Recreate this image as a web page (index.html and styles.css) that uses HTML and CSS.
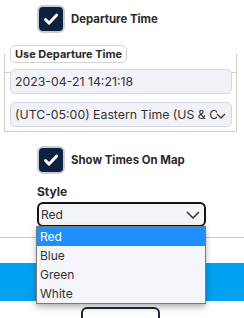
FILE: index.html
```html
<!DOCTYPE html>
<html>
<head>
<meta charset="utf-8">
<link rel="stylesheet" href="styles.css">
</head>
<body>
<div class="page">
  <div class="check-row first">
    <span class="box"><svg viewBox="0 0 28 28" width="28" height="28"><path d="M7.5 14.5l4.3 4.3 8.7-9.3" fill="none" stroke="#fff" stroke-width="3.4" stroke-linecap="round" stroke-linejoin="round"/></svg></span>
    <span class="check-label">Departure Time</span>
  </div>
  <fieldset class="group">
    <legend class="legend">Use Departure Time</legend>
    <div class="field">2023-04-21 14:21:18</div>
    <div class="field select"><span class="sel-text">(UTC-05:00) Eastern Time (US &amp; Canada)</span><svg class="chev" viewBox="0 0 10 6" width="10" height="6"><path d="M1 1l4 4 4-4" fill="none" stroke="#333" stroke-width="1.3"/></svg></div>
  </fieldset>
  <div class="check-row second">
    <span class="box"><svg viewBox="0 0 28 28" width="28" height="28"><path d="M7.5 14.5l4.3 4.3 8.7-9.3" fill="none" stroke="#fff" stroke-width="3.4" stroke-linecap="round" stroke-linejoin="round"/></svg></span>
    <span class="check-label">Show Times On Map</span>
  </div>
  <div class="style-block">
    <div class="style-label">Style</div>
    <div class="style-select"><span>Red</span><svg viewBox="0 0 14 8" width="14" height="8"><path d="M1 1l6 6 6-6" fill="none" stroke="#333" stroke-width="1.5"/></svg></div>
    <ul class="dropdown">
      <li class="opt active">Red</li>
      <li class="opt">Blue</li>
      <li class="opt">Green</li>
      <li class="opt">White</li>
    </ul>
  </div>
  <div class="divider"></div>
  <div class="band"></div>
  <div class="btn-row"><span class="route-btn">View Route</span></div>
</div>
</body>
</html>
```
FILE: styles.css
```css
html, body {
  margin: 0;
  padding: 0;
  background: #fff;
  overflow: hidden;
}
body {
  font-family: Inter, "Noto Sans", sans-serif;
  color: #2a2a2a;
  width: 244px;
  height: 318px;
}
.page {
  padding-top: 5px;
}
.check-row {
  display: flex;
  align-items: center;
  gap: 6px;
  padding-left: 37px;
  height: 28px;
}
.check-row.second {
  margin-top: 14px;
}
.box {
  width: 28px;
  height: 28px;
  box-sizing: border-box;
  border-radius: 6px;
  background: #0e2240;
  border: 2px solid #c9cdd4;
  display: flex;
  align-items: center;
  justify-content: center;
}
.box svg {
  width: 24px;
  height: 24px;
}
.check-label {
  font-weight: 700;
  font-size: 11.4px;
  color: #2b2b2b;
}
.group {
  margin: 12px 7px 0 4px;
  padding: 5px 4px 4px 5px;
  min-width: 0;
  border: 1px solid #cfcfcf;
  border-top: none;
  position: relative;
  display: flex;
  flex-direction: column;
  gap: 8px;
}
.group::before {
  content: "";
  position: absolute;
  left: -1px;
  right: -1px;
  top: 8px;
  border-top: 1px solid #cfcfcf;
}
.legend {
  float: none;
  margin: 0;
  padding: 1px 4px 0 4px;
  height: 18px;
  box-sizing: border-box;
  border: 1px solid #d3d3d3;
  border-radius: 5px;
  background: #fff;
  font-weight: 700;
  font-size: 11px;
  color: #2b2b2b;
  position: relative;
  z-index: 1;
  width: max-content;
  line-height: 15px;
  margin-bottom: 1px;
}
.field {
  height: 25px;
  box-sizing: border-box;
  border: 1px solid #d5d8de;
  border-radius: 5px;
  background: #f1f2f7;
  font-size: 12.3px;
  color: #333;
  padding: 0 4px;
  display: flex;
  align-items: center;
  white-space: nowrap;
  overflow: hidden;
  position: relative;
  min-width: 0;
}
.field.select {
  padding-right: 14px;
}
.sel-text {
  overflow: hidden;
  flex: 1;
  min-width: 0;
}
.chev {
  position: absolute;
  right: 5px;
  top: 10px;
}
.style-block {
  padding-left: 37px;
  margin-top: 10px;
  position: relative;
}
.style-label {
  font-weight: 700;
  font-size: 12px;
  line-height: 16px;
  color: #2b2b2b;
}
.style-select {
  margin-top: 2px;
  width: 169px;
  height: 25px;
  box-sizing: border-box;
  border: 2px solid #151515;
  border-radius: 6px;
  background: #f3f4f8;
  display: flex;
  align-items: center;
  justify-content: space-between;
  padding: 0 4px 0 2px;
  font-size: 12px;
  color: #333;
}
.dropdown {
  position: absolute;
  left: 36px;
  top: 42px;
  width: 170px;
  box-sizing: border-box;
  margin: 0;
  padding: 0;
  list-style: none;
  background: #f4f5fa;
  border: 1px solid #7a7a7a;
  box-shadow: 0 3px 6px rgba(0,0,0,0.3);
  z-index: 5;
}
.opt {
  height: 19px;
  line-height: 19px;
  padding-left: 3px;
  font-size: 12px;
  color: #333;
}
.opt.active {
  background: #1e8fff;
  color: #fff;
}
.divider {
  margin-top: 10px;
  height: 1px;
  background: #c8c8c8;
}
.band {
  margin-top: 25px;
  height: 38px;
  background: #00a1f1;
}
.btn-row {
  display: flex;
  padding-left: 81px;
  padding-top: 6px;
}
.route-btn {
  width: 79px;
  height: 30px;
  box-sizing: border-box;
  border: 2px solid #1a2a3a;
  border-radius: 6px;
  font-size: 11px;
  color: #aaa;
  text-align: center;
  padding-top: 8px;
}
```
